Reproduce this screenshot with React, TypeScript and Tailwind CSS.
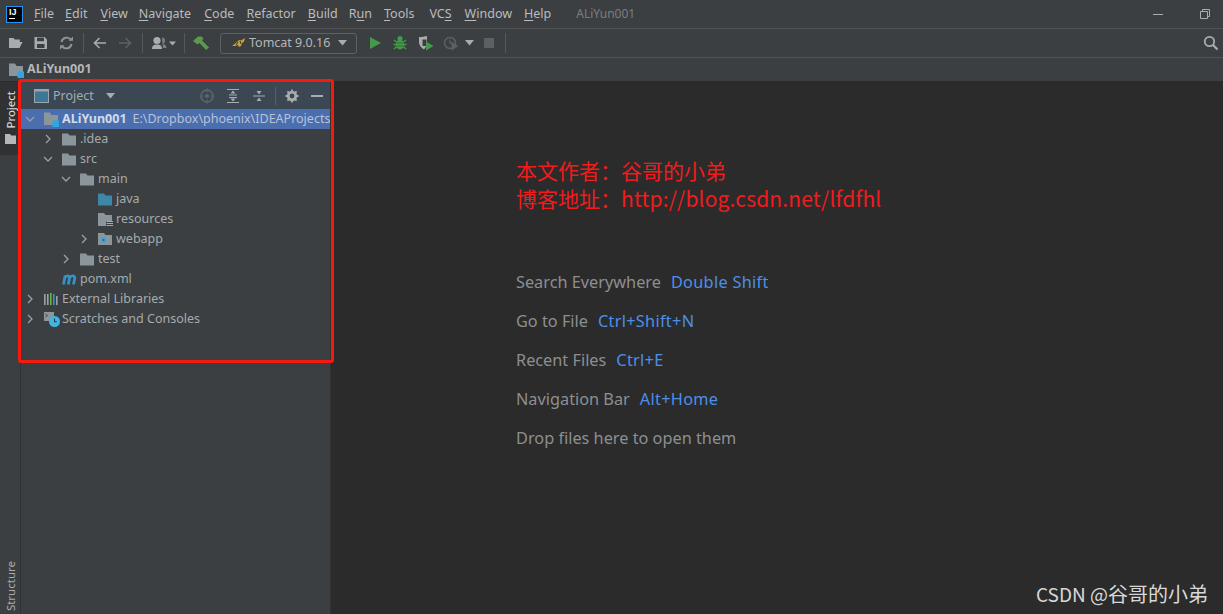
import type { ReactNode } from "react";

const uiFont = "font-['Noto_Sans','Open_Sans',sans-serif]";

const menus: { before: string; mark: string; after: string; extra?: string }[] = [
  { before: "", mark: "F", after: "ile" },
  { before: "", mark: "E", after: "dit", extra: "-ml-px" },
  { before: "", mark: "V", after: "iew", extra: "ml-px" },
  { before: "", mark: "N", after: "avigate", extra: "-ml-px" },
  { before: "", mark: "C", after: "ode", extra: "ml-px" },
  { before: "", mark: "R", after: "efactor" },
  { before: "", mark: "B", after: "uild" },
  { before: "R", mark: "u", after: "n", extra: "-ml-px" },
  { before: "", mark: "T", after: "ools" },
  { before: "VC", mark: "S", after: "", extra: "ml-[3px]" },
  { before: "", mark: "W", after: "indow", extra: "ml-px" },
  { before: "", mark: "H", after: "elp" },
];

function Folder({ color = "#8b959c" }: { color?: string }) {
  return (
    <svg width="16" height="16" viewBox="1 0 16 16" className="shrink-0">
      <path d="M1 2.5h6l1.5 2H15v10H1z" fill={color} />
    </svg>
  );
}

function ModuleFolder() {
  return (
    <svg width="16" height="16" viewBox="1 0 16 16" className="shrink-0">
      <path d="M1 1.5h6l1.5 2.5H15v10H1z" fill="#8b959c" />
      <rect x="9.5" y="9.5" width="6.5" height="6.5" fill="#2ea6e6" />
    </svg>
  );
}

function ResourcesFolder() {
  return (
    <svg width="16" height="16" viewBox="1 0 16 16" className="shrink-0">
      <path d="M1 2h6l1.5 2H15v6H9v5H1z" fill="#8b959c" />
      <path d="M9.5 10.5H16M9.5 12.5H16M9.5 14.5H16" stroke="#d9a343" strokeWidth="1" />
    </svg>
  );
}

function WebFolder() {
  return (
    <svg width="16" height="16" viewBox="1 0 16 16" className="shrink-0">
      <path d="M1 2h6l1.5 2H15v10H1z" fill="#8b959c" />
      <circle cx="6.5" cy="9" r="2.6" fill="#2ea6e6" />
      <circle cx="6.5" cy="9" r="1" fill="#3d5a6c" />
    </svg>
  );
}

function MavenIcon() {
  return (
    <svg width="16" height="16" viewBox="0 0 16 16" className="shrink-0">
      <path
        d="M1.5 13.5 3.2 4.5M2.8 7C4 4.4 7.6 4.2 7.500 7L6.300 13.500M7.500 7C8.800 4.300 13 4.200 12.800 7L11.500 13.500"
        fill="none"
        stroke="#3592c4"
        strokeWidth="2.8"
      />
    </svg>
  );
}

function LibrariesIcon() {
  return (
    <svg width="16" height="16" viewBox="0 0 16 16" className="shrink-0">
      <rect x="0" y="3" width="1.6" height="11" fill="#9aa1a6" />
      <rect x="3" y="3" width="1.6" height="11" fill="#9aa1a6" />
      <rect x="6" y="2" width="1.6" height="12" fill="#62b543" />
      <rect x="9" y="3" width="1.6" height="11" fill="#3592c4" />
      <rect x="12" y="5" width="1.6" height="9" fill="#9aa1a6" />
    </svg>
  );
}

function ScratchesIcon() {
  return (
    <svg width="16" height="16" viewBox="0 0 16 16" className="shrink-0">
      <rect x="0" y="1" width="10" height="9" fill="#8b959c" />
      <path d="M1.500 3l2 1.500L1.500 6" fill="none" stroke="#3c3f41" strokeWidth="0.9" />
      <circle cx="10.5" cy="10.5" r="5.5" fill="#40b6e0" />
      <path d="M10.5 7.5v3.3h2.3" fill="none" stroke="#2b3a44" strokeWidth="1.1" />
    </svg>
  );
}

function Chevron({ open }: { open: boolean }) {
  return (
    <svg width="14" height="14" viewBox="0 0 14 14" className="shrink-0">
      <path
        d={open ? "M3 5l4 4 4-4" : "M5 3l4 4-4 4"}
        fill="none"
        stroke="#9da0a2"
        strokeWidth="1.3"
      />
    </svg>
  );
}

function TreeRow({
  depth,
  arrow,
  icon,
  selected,
  children,
}: {
  depth: number;
  arrow?: "open" | "closed";
  icon: ReactNode;
  selected?: boolean;
  children: ReactNode;
}) {
  return (
    <div
      className={`flex h-5 items-center whitespace-nowrap text-[12.5px] ${
        selected ? "bg-[#4b6eaf] text-[#d5dbe6]" : "text-[#a4abaf]"
      }`}
      style={{ paddingLeft: 2 + depth * 18 }}
    >
      <span className="flex w-[21px] shrink-0 justify-start">
        {arrow && <Chevron open={arrow === "open"} />}
      </span>
      {icon}
      <span className="ml-[2px]">{children}</span>
    </div>
  );
}

function ToolIcon({ width, children }: { width: number; children: ReactNode }) {
  return (
    <svg width={width} height="16" viewBox={`0 0 ${width} 16`} className="shrink-0">
      {children}
    </svg>
  );
}

function Divider() {
  return <div className="h-5 w-px shrink-0 bg-[#55585a]" />;
}

function Toolbar() {
  return (
    <div className="flex h-[29px] shrink-0 items-center border-b border-[#515354] pl-2 pr-[5px]">
      <ToolIcon width={15}>
        <path d="M1 13V3h4.5l1.3 1.6h5V7H4L1 13h10.500L14.500 7H4" fill="#a9acae" />
      </ToolIcon>
      <span className="ml-[10px]">
        <ToolIcon width={15}>
          <path d="M1.5 2h10L14 4.5V14H1.5z" fill="#a9acae" />
          <rect x="4" y="2.6" width="7" height="3.6" fill="#3c3f41" />
          <rect x="4" y="9" width="7.5" height="4" fill="#3c3f41" />
        </ToolIcon>
      </span>
      <span className="ml-[11px]">
        <ToolIcon width={15}>
          <path d="M2.5 7A5.2 5.2 0 0 1 12 5M12.5 9A5.2 5.2 0 0 1 3 11" fill="none" stroke="#8f9497" strokeWidth="1.9" />
          <path d="M9.5 5.800h4.500V1.500zM5.500 10.200H1v4.300z" fill="#8f9497" />
        </ToolIcon>
      </span>
      <span className="ml-[9px]">
        <Divider />
      </span>
      <span className="ml-2">
        <ToolIcon width={15}>
          <path d="M14 8H3M7.500 3 2.500 8l5 5" fill="none" stroke="#a9acae" strokeWidth="1.6" />
        </ToolIcon>
      </span>
      <span className="ml-[11px]">
        <ToolIcon width={15}>
          <path d="M1 8h11M7.500 3l5 5-5 5" fill="none" stroke="#5d6062" strokeWidth="1.6" />
        </ToolIcon>
      </span>
      <span className="ml-[9px]">
        <Divider />
      </span>
      <span className="ml-2">
        <ToolIcon width={26}>
          <circle cx="6" cy="5.500" r="3.600" fill="#a9acae" />
          <path d="M1 14c0-3.500 2-4.500 5-4.500s5 1 5 4.500z" fill="#a9acae" />
          <path d="M11 2.500c2 0 3 1.200 3 3s-1 3-2 3.500c2 .5 3.500 1.500 3.500 4H12" fill="#7c8083" />
          <path d="M18 6.500h7l-3.500 4z" fill="#a9acae" />
        </ToolIcon>
      </span>
      <span className="ml-[7px]">
        <Divider />
      </span>
      <span className="ml-2">
        <ToolIcon width={16}>
          <path d="M0 6 5 1.500h3.500l2 2-1.500 2L16 12.500 13 15 6.500 8 4.500 9.500z" fill="#589c4b" />
        </ToolIcon>
      </span>
      <div className="ml-[11px] flex h-[21px] w-[137px] shrink-0 items-center rounded-[3px] border border-[#5e6163] pl-[10px] text-[12.5px] text-[#b4b7b9]">
        <ToolIcon width={15}>
          <path d="M1 11c2-1 3-3 5-4l2-2 2 .5L14 3l-1 3.500-2 1.500-1 3-2 1-1-2-3 1z" fill="#c9a13c" />
          <path d="M5 10l2-3M9 6l1 3" stroke="#3b3020" strokeWidth="1" />
        </ToolIcon>
        <span className="ml-[3px] whitespace-nowrap">Tomcat 9.0.16</span>
        <svg width="9" height="6" viewBox="0 0 9 6" className="ml-auto mr-[9px]">
          <path d="M0 0h9L4.500 5.500z" fill="#a9acae" />
        </svg>
      </div>
      <span className="ml-[11px]">
        <ToolIcon width={14}>
          <path d="M2 2l11 6-11 6z" fill="#439a4a" />
        </ToolIcon>
      </span>
      <span className="ml-[11px]">
        <ToolIcon width={14}>
          <path d="M1 5l2.500 2M13 5l-2.500 2M.5 9.500h3M13.500 9.500h-3M1 14l2.500-2.500M13 14l-2.500-2.500" stroke="#439a4a" strokeWidth="1.3" />
          <ellipse cx="7" cy="9.500" rx="4.200" ry="5" fill="#439a4a" />
          <circle cx="7" cy="3.500" r="2.500" fill="#439a4a" />
          <path d="M3.500 8h7M3.500 11h7" stroke="#2f6e35" strokeWidth="0.9" />
        </ToolIcon>
      </span>
      <span className="ml-[11px]">
        <ToolIcon width={16}>
          <path d="M1 2c3 0 6-.5 8-1v9l-3 4.500C3 13 1 10 1 7z" fill="#a9acae" />
          <path d="M4.500 4.500h4v6.500h-4z" fill="#3c3f41" />
          <path d="M8 6.500l7.500 4.500L8 15.500z" fill="#439a4a" />
        </ToolIcon>
      </span>
      <span className="ml-[9px]">
        <ToolIcon width={16}>
          <circle cx="7" cy="8" r="5.500" fill="none" stroke="#5d6062" strokeWidth="1.5" />
          <path d="M7 4.500V8h3" fill="none" stroke="#5d6062" strokeWidth="1.2" />
          <path d="M8.500 7l7 4-7 4.500z" fill="#5d6062" />
        </ToolIcon>
      </span>
      <svg width="9" height="6" viewBox="0 0 9 6" className="ml-[6px] shrink-0">
        <path d="M0 0h9L4.500 5.500z" fill="#a9acae" />
      </svg>
      <div className="ml-[10px] h-[10px] w-[10px] shrink-0 bg-[#5d6062]" />
      <span className="ml-[11px]">
        <Divider />
      </span>
      <span className="ml-auto">
        <ToolIcon width={15}>
          <circle cx="6.500" cy="6.500" r="4.700" fill="none" stroke="#a9acae" strokeWidth="1.8" />
          <path d="M10 10l4.500 4.500" stroke="#a9acae" strokeWidth="2.2" />
        </ToolIcon>
      </span>
    </div>
  );
}

function TitleBar() {
  return (
    <div className={`flex h-[29px] shrink-0 items-center border-b border-[#515354] ${uiFont}`}>
      <div className="ml-[6px] flex h-[17px] w-[17px] shrink-0 flex-col border border-[#2a8fe6] bg-black px-[2px] pt-[1px]">
        <span className="font-['Liberation_Sans',sans-serif] text-[9px] font-bold leading-[9px] text-white">IJ</span>
        <span className="mt-px h-px w-[6px] bg-white" />
      </div>
      <nav className="ml-[11px] flex gap-[12px] text-[12.5px] text-[#b9bcbe]">
        {menus.map((m) => (
          <span key={m.before + m.mark + m.after} className={`whitespace-nowrap ${m.extra ?? ""}`}>
            {m.before}
            <span className="underline underline-offset-2">{m.mark}</span>
            {m.after}
          </span>
        ))}
      </nav>
      <span className="ml-[25px] text-[12px] text-[#7b7e80]">ALiYun001</span>
      <div className="ml-auto flex items-center gap-[37px] pr-[13px]">
        <div className="h-px w-[10px] bg-[#a9acae]" />
        <svg width="10" height="10" viewBox="0 0 10 10">
          <path d="M.5 2.500h7v7h-7zM2.500 2.500v-2h7v7h-2" fill="none" stroke="#a9acae" strokeWidth="1" />
        </svg>
      </div>
    </div>
  );
}

function ProjectPanel() {
  return (
    <section className={`flex w-[310px] shrink-0 flex-col border-r border-[#323232] ${uiFont}`}>
      <header className="flex h-[27px] shrink-0 items-center bg-[#3c4754] pl-[13px] text-[12.5px] text-[#a4abaf]">
        <svg width="15" height="14" viewBox="0 0 15 14" className="shrink-0">
          <rect x="0.5" y="0.5" width="14" height="13" fill="#3c7893" stroke="#9aa5ad" />
          <rect x="0.5" y="0.5" width="14" height="2" fill="#9aa5ad" />
        </svg>
        <span className="ml-[4px] pt-px">Project</span>
        <svg width="9" height="6" viewBox="0 0 9 6" className="ml-[12px]">
          <path d="M0 0h9L4.500 5.500z" fill="#a9acae" />
        </svg>
        <svg width="16" height="16" viewBox="0 0 16 16" className="ml-[84px]">
          <circle cx="8" cy="8" r="6" fill="none" stroke="#5f6568" strokeWidth="1.6" />
          <circle cx="8" cy="8" r="2" fill="#5f6568" />
          <path d="M8 .5v4M8 11.500v4M.5 8h4M11.500 8h4" stroke="#5f6568" strokeWidth="1.2" />
        </svg>
        <svg width="14" height="14" viewBox="0 0 14 14" className="ml-[11px]">
          <path d="M1 .5h12M1 13.500h12M3 6h8M3 8.500h8" stroke="#a9acae" strokeWidth="1" />
          <path d="M7 1.500 4.500 4.500h5zM7 12.500l-2.500-3h5z" fill="#a9acae" />
        </svg>
        <svg width="14" height="14" viewBox="0 0 14 14" className="ml-[12px]">
          <path d="M1 7h12" stroke="#a9acae" strokeWidth="1" />
          <path d="M7 5.500 4.500 2h5zM7 8.500l-2.500 3.500h5z" fill="#a9acae" />
        </svg>
        <div className="ml-[9px] h-[18px] w-px bg-[#55606b]" />
        <svg width="14" height="14" viewBox="0 0 14 14" className="ml-[9px]">
          <circle cx="7" cy="7" r="3.800" fill="none" stroke="#a9acae" strokeWidth="2.8" />
          <path d="M7 .5v2.500M7 11v2.500M.5 7H3M11 7h2.500M2.400 2.400l1.800 1.800M9.800 9.800l1.800 1.800M2.400 11.600l1.800-1.800M9.800 4.200l1.800-1.800" stroke="#a9acae" strokeWidth="1.8" />
        </svg>
        <div className="ml-[12px] h-[2px] w-[12px] bg-[#a9acae]" />
      </header>
      <div className="overflow-hidden">
        <TreeRow depth={0} arrow="open" icon={<ModuleFolder />} selected>
          <span className="font-bold">ALiYun001</span>
          <span className="ml-[6px] text-[#b8c2d6]">E:\Dropbox\phoenix\IDEAProjects</span>
        </TreeRow>
        <TreeRow depth={1} arrow="closed" icon={<Folder />}>.idea</TreeRow>
        <TreeRow depth={1} arrow="open" icon={<Folder />}>src</TreeRow>
        <TreeRow depth={2} arrow="open" icon={<Folder />}>main</TreeRow>
        <TreeRow depth={3} icon={<Folder color="#3d88a8" />}>java</TreeRow>
        <TreeRow depth={3} icon={<ResourcesFolder />}>resources</TreeRow>
        <TreeRow depth={3} arrow="closed" icon={<WebFolder />}>webapp</TreeRow>
        <TreeRow depth={2} arrow="closed" icon={<Folder />}>test</TreeRow>
        <TreeRow depth={1} icon={<MavenIcon />}>pom.xml</TreeRow>
        <TreeRow depth={0} arrow="closed" icon={<LibrariesIcon />}>External Libraries</TreeRow>
        <TreeRow depth={0} arrow="closed" icon={<ScratchesIcon />}>Scratches and Consoles</TreeRow>
      </div>
    </section>
  );
}

function Hint({ label, keys }: { label: string; keys?: string }) {
  return (
    <p className="h-[39px] whitespace-nowrap text-[16.3px] leading-[22px] text-[#8c8f91]">
      {label}
      {keys && <span className="ml-[10px] tracking-[0.3px] text-[#4d8fe8]">{keys}</span>}
    </p>
  );
}

export default function App() {
  return (
    <div className="relative flex h-[614px] w-[1223px] flex-col overflow-hidden bg-[#3c3f41]">
      <TitleBar />
      <div className={uiFont}>
        <Toolbar />
      </div>
      <div className={`flex h-[24px] shrink-0 items-center border-b border-[#2b2b2b] pl-[9px] text-[12.5px] font-bold text-[#b4b7b9] ${uiFont}`}>
        <ModuleFolder />
        <span className="ml-[2px]">ALiYun001</span>
      </div>
      <div className="flex min-h-0 flex-1">
        <aside className={`flex w-[21px] shrink-0 flex-col justify-between border-r border-[#323232] text-[11.5px] ${uiFont}`}>
          <div className="flex h-[73px] flex-col items-center bg-[#2f3133] pt-[9px]">
            <span className="rotate-180 leading-[13px] text-[#e0e0e0] [writing-mode:vertical-rl]">Project</span>
            <svg width="13" height="12" viewBox="0 0 13 12" className="mt-[4px]">
              <path d="M1 1h5l1.200 1.500H12V11H1z" fill="#b4b7b9" />
            </svg>
          </div>
          <span className="mb-[3px] rotate-180 self-center leading-[13px] text-[#a9acae] [writing-mode:vertical-rl]">Structure</span>
        </aside>
        <ProjectPanel />
        <main className={`min-w-0 flex-1 bg-[#2b2b2b] pl-[185px] pt-[74px] ${uiFont}`}>
          <div className="font-['Noto_Sans_CJK_SC','Noto_Sans',sans-serif] text-[21px] leading-[28px] text-[#f01c1c]">
            <p>本文作者：谷哥的小弟</p>
            <p>
              博客地址：<span className="tracking-[0.15px]">http://blog.csdn.net/lfdfhl</span>
            </p>
          </div>
          <div className="mt-[59px]">
            <Hint label="Search Everywhere" keys="Double Shift" />
            <Hint label="Go to File" keys="Ctrl+Shift+N" />
            <Hint label="Recent Files" keys="Ctrl+E" />
            <Hint label="Navigation Bar" keys="Alt+Home" />
            <Hint label="Drop files here to open them" />
          </div>
        </main>
      </div>
      <div className="pointer-events-none absolute left-[18px] top-[79px] h-[284px] w-[316px] rounded-[3px] border-[3px] border-[#f5190f]" />
      <span className="absolute bottom-[9px] right-[15px] whitespace-nowrap font-['Noto_Sans_CJK_SC',sans-serif] text-[20px] leading-[22px] text-[#d8d8d8]">
        <span className="text-[19px]">CSDN @</span>谷哥的小弟
      </span>
    </div>
  );
}
